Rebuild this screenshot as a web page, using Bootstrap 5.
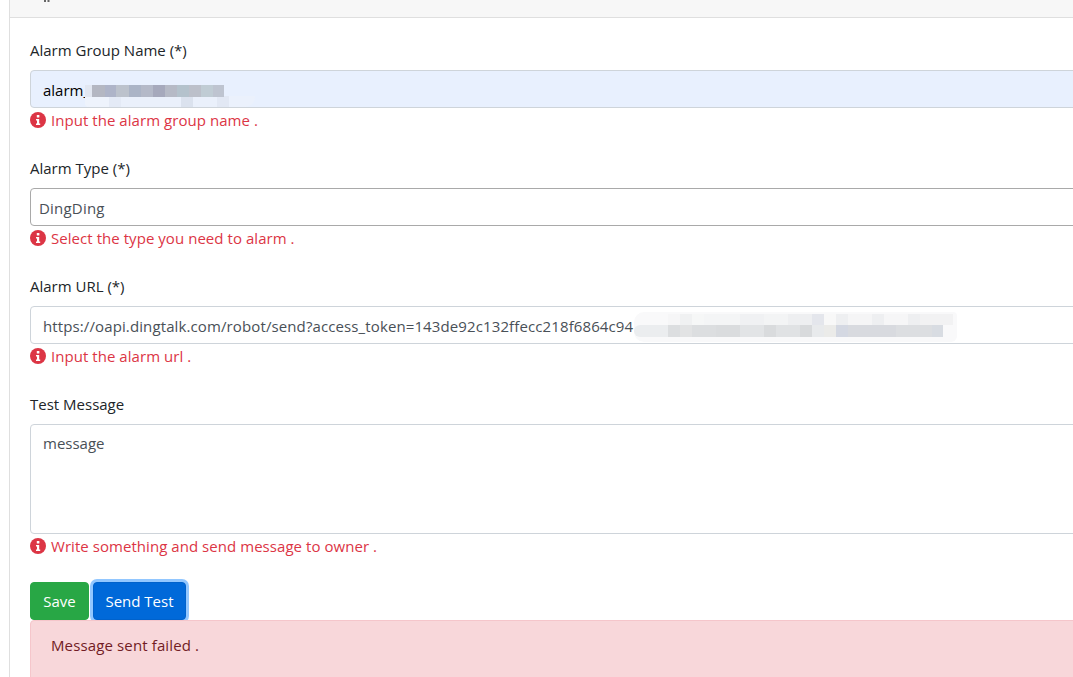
<!DOCTYPE html>
<html lang="en">
<head>
<meta charset="utf-8">
<title>Alarm Group</title>
<link rel="stylesheet" href="https://cdn.jsdelivr.net/npm/bootstrap@5.3.0/dist/css/bootstrap.min.css">
<style>
html,body{height:100%;overflow:hidden;background:#fff}
body{font-family:"Open Sans","Noto Sans",sans-serif;font-size:15px;color:#212529}
.sheet{margin:-31px -30px 0 9px;border-radius:0;border-color:#dfdfdf}
.sheet .card-header{display:flex;align-items:flex-start;padding:28px 20px 0;height:48px;background:#f7f7f7;border-color:#dfdfdf}
.sheet .card-header svg{margin-left:14px}
.sheet .card-body{padding:20px 20px 0}
.fld{margin-bottom:24px}
.fld label{display:block;line-height:24px;margin-bottom:8px}
.fld .form-control,.fld .form-select{height:38px;font-size:15px;padding:7px 12px 5px;color:#495057;border-color:#ced4da;border-radius:4px;box-shadow:none}
.fld .form-select{padding-left:8px;border-color:#a9a9a9;background-image:none;letter-spacing:.2px}
.fld textarea.form-control{height:110px;resize:none}
.fld .form-control.autofilled{background:#e8f0fe;color:#000}
.fld .url-text{letter-spacing:.115px}
.hint{display:flex;align-items:center;gap:5px;height:24px;color:#dc3545;letter-spacing:.05px}
.hint svg{flex:none}
.maskwrap{position:relative}
.smear{position:absolute;pointer-events:none}
.s-name-low{left:55px;top:26px;width:170px;height:11px;border-radius:0 0 10px 4px;background:linear-gradient(90deg,#eef3fc 0 24px,#e4eaf6 24px 36px,#eaf0fb 36px 96px,#dbe2ee 96px 108px,#eaf0fb 108px 132px,#e2e8f4 132px 144px,#ebf1fc 144px)}
.s-name-top{left:55px;top:15px;width:139px;height:12px;background:linear-gradient(90deg,#e2e7f1 0 7px,#b4b7c2 7px 20px,#aeb4c8 20px 31px,#bcc2cc 31px 44px,#abb4c6 44px 56px,#b4b9c8 56px 68px,#a6a9bc 68px 80px,#b6bac6 80px 92px,#b4c2cc 92px 104px,#bcc0ca 104px 116px,#c0ccd4 116px 128px,#bec4d0 128px)}
.s-url-back{left:604px;top:6px;width:323px;height:30px;background:#f9f9fa;border-radius:10px 4px 6px 10px}
.s-url-top{left:638px;top:8px;width:285px;height:11px;background:linear-gradient(90deg,#f6f6f7 0 12px,#f0f1f2 12px 24px,#f6f7f7 24px 36px,#f4f5f6 36px 72px,#f0f1f3 72px 96px,#f3f4f5 96px 120px,#eeeff1 120px 144px,#e4e6ec 144px 156px,#f8f8f8 156px 168px,#eeeff1 168px 180px,#f5f5f6 180px 204px,#eeeff1 204px 216px,#f6f6f7 216px 240px,#eeeff1 240px 252px,#f2f2f3 252px)}
.s-url-low{left:638px;top:19px;width:275px;height:12px;background:linear-gradient(90deg,#dcdee0 0 12px,#e2e3e4 12px 24px,#dcdee0 24px 48px,#dadcde 48px 72px,#e2e4e6 72px 96px,#d9dbdd 96px 108px,#e0e2e4 108px 132px,#d8dadc 132px 144px,#e8eaec 144px 156px,#ebebe9 156px 168px,#d4d8e2 168px 180px,#d8dadf 180px 228px,#dcdee1 228px 264px,#d8dce2 264px)}
.s-url-lead{left:604px;top:19px;width:34px;height:12px;border-radius:6px 0 0 6px;background:#ebedef}
.acts{display:flex;gap:4px}
.acts .btn{height:38px;font-size:15px;padding:6px 0;border-radius:4px}
.acts .btn-success{width:59px;background:#28a745;border-color:#28a745}
.acts .btn-primary{width:93px;background:#0069d9;border-color:#0062cc;box-shadow:0 0 0 3px rgba(38,143,255,.5)}
.sheet .alert{margin:0;padding:12px 20px;height:80px;background:#f8d7da;border-color:#f5c6cb;color:#721c24;border-radius:4px;line-height:24px;letter-spacing:.13px}
</style>
</head>
<body>
<div class="card sheet">
  <div class="card-header"><svg width="6" height="4" viewBox="0 0 6 4" aria-hidden="true"><path d="M0 0h2v4H0zM3.500 0h2v4h-2z" fill="#666"/></svg></div>
  <div class="card-body">
    <div class="fld">
      <label for="a1">Alarm Group Name (*)</label>
      <div class="maskwrap">
        <input id="a1" class="form-control autofilled" value="alarm_">
        <div class="smear s-name-low"></div>
        <div class="smear s-name-top"></div>
      </div>
      <div class="hint"><svg width="16" height="16" viewBox="0 0 16 16"><circle cx="8" cy="8" r="8" fill="#dc3545"/><rect x="6.800" y="3" width="2.600" height="2.600" rx=".6" fill="#fff"/><path d="M6 7h3.200v4.400h1V13H6v-1.600h1V8.600H6z" fill="#fff"/></svg><span>Input the alarm group name .</span></div>
    </div>
    <div class="fld">
      <label for="a2">Alarm Type (*)</label>
      <select id="a2" class="form-select"><option>DingDing</option></select>
      <div class="hint"><svg width="16" height="16" viewBox="0 0 16 16"><circle cx="8" cy="8" r="8" fill="#dc3545"/><rect x="6.800" y="3" width="2.600" height="2.600" rx=".6" fill="#fff"/><path d="M6 7h3.200v4.400h1V13H6v-1.600h1V8.600H6z" fill="#fff"/></svg><span>Select the type you need to alarm .</span></div>
    </div>
    <div class="fld">
      <label for="a3">Alarm URL (*)</label>
      <div class="maskwrap">
        <input id="a3" class="form-control url-text" value="https://oapi.dingtalk.com/robot/send?access_token=143de92c132ffecc218f6864c94">
        <div class="smear s-url-back"></div>
        <div class="smear s-url-top"></div>
        <div class="smear s-url-lead"></div>
        <div class="smear s-url-low"></div>
      </div>
      <div class="hint"><svg width="16" height="16" viewBox="0 0 16 16"><circle cx="8" cy="8" r="8" fill="#dc3545"/><rect x="6.800" y="3" width="2.600" height="2.600" rx=".6" fill="#fff"/><path d="M6 7h3.200v4.400h1V13H6v-1.600h1V8.600H6z" fill="#fff"/></svg><span>Input the alarm url .</span></div>
    </div>
    <div class="fld">
      <label for="a4">Test Message</label>
      <textarea id="a4" class="form-control">message</textarea>
      <div class="hint"><svg width="16" height="16" viewBox="0 0 16 16"><circle cx="8" cy="8" r="8" fill="#dc3545"/><rect x="6.800" y="3" width="2.600" height="2.600" rx=".6" fill="#fff"/><path d="M6 7h3.200v4.400h1V13H6v-1.600h1V8.600H6z" fill="#fff"/></svg><span>Write something and send message to owner .</span></div>
    </div>
    <div class="acts">
      <button type="button" class="btn btn-success">Save</button>
      <button type="button" class="btn btn-primary">Send Test</button>
    </div>
    <div class="alert alert-danger" role="alert">Message sent failed .</div>
  </div>
</div>
</body>
</html>
